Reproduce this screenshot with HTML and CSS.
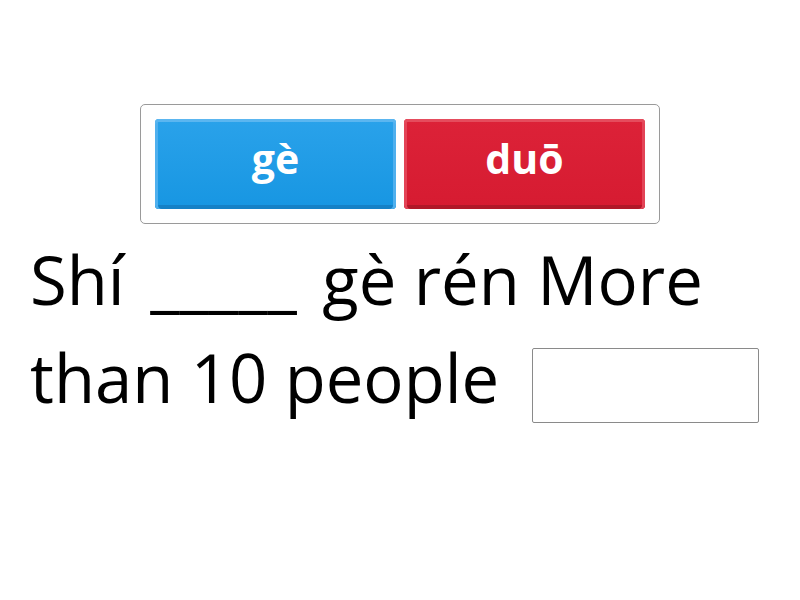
FILE: index.html
```html
<!DOCTYPE html>
<html lang="en">
<head>
<meta charset="utf-8">
<title>Missing word</title>
<link rel="stylesheet" href="styles.css">
</head>
<body>
<div class="stage">
  <div class="tray">
    <button class="tile tile-blue">gè</button>
    <button class="tile tile-red">duō</button>
  </div>
  <p class="sentence"><span class="word">Shí</span> <span class="blank">_____</span> <span class="word">gè rén More than 10 people</span> <span class="slot"></span></p>
</div>
</body>
</html>
```
FILE: styles.css
```css
html, body {
  margin: 0;
  padding: 0;
  background: #ffffff;
}

body {
  font-family: "Open Sans", "Noto Sans", sans-serif;
  color: #000000;
}

.stage {
  width: 800px;
  height: 600px;
  padding-top: 104px;
  box-sizing: border-box;
}

.tray {
  width: 520px;
  height: 120px;
  margin: 0 auto;
  box-sizing: border-box;
  border: 1px solid #9a9a9a;
  border-radius: 5px;
  padding: 14px;
  display: flex;
  gap: 8px;
}

.tile {
  flex: 1;
  height: 90px;
  border: none;
  border-radius: 4px;
  font-family: "Open Sans", sans-serif;
  font-weight: 700;
  font-size: 41px;
  line-height: 56px;
  color: #ffffff;
  padding: 0 0 12px;
  cursor: pointer;
}

.tile-blue {
  background: linear-gradient(#2aa2ea, #1796e2);
  box-shadow:
    inset 0 3px 0 #5bb6f0,
    inset 3px 0 0 #4fb0ee,
    inset -3px 0 0 #4fb0ee,
    inset 0 -4px 0 #1581c6;
}

.tile-red {
  background: linear-gradient(#dc2238, #d61b31);
  box-shadow:
    inset 0 3px 0 #e54c5d,
    inset 3px 0 0 #e34457,
    inset -3px 0 0 #e34457,
    inset 0 -4px 0 #b01828;
}

.sentence {
  margin: 6px 30px 0;
  font-size: 67px;
  line-height: 98px;
  width: 740px;
}

.blank {
  display: inline-block;
  line-height: 80px;
  margin: 0 8px;
}

.slot {
  display: inline-block;
  width: 225px;
  height: 73px;
  border: 1px solid #8a8a8a;
  border-radius: 2px;
  vertical-align: middle;
  margin-left: 15px;
}
```
